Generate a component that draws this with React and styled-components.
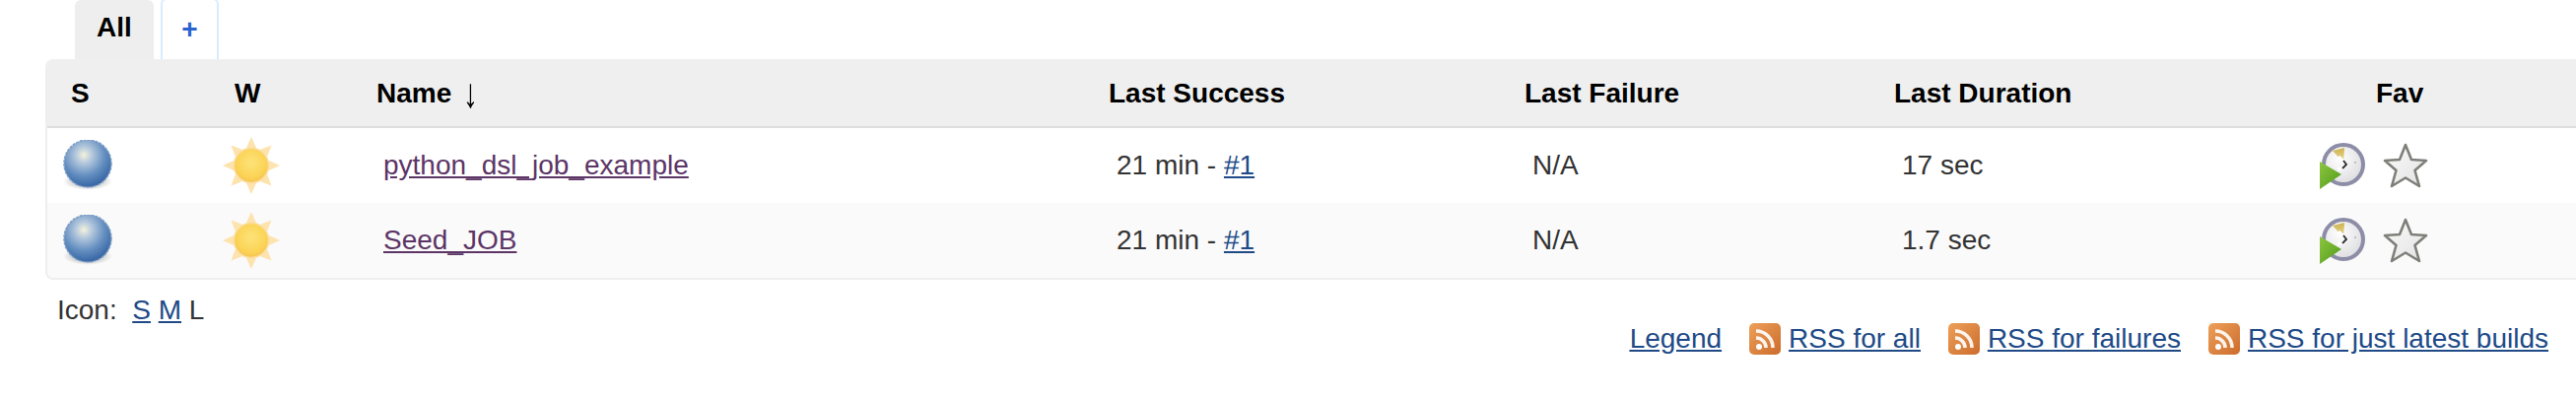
import React from "react";
import styled, { createGlobalStyle } from "styled-components";

const Global = createGlobalStyle`
  html, body { margin: 0; padding: 0; background: #fff; }
  body { font-family: "Liberation Sans", Arial, sans-serif; font-size: 28px; color: #333; overflow: hidden; }
`;
const Page = styled.div`width: 2614px; height: 404px; overflow: hidden;`;
const TabBar = styled.div`display: flex; height: 60px; padding-left: 76px; gap: 7px;`;
const Tab = styled.div`
  width: 80px; box-sizing: border-box; background: #eee;
  border-top-left-radius: 6px; border-top-right-radius: 6px;
  font-weight: bold; color: #000; font-size: 28px; text-align: center; line-height: 56px;
`;
const AddTab = styled.a`
  width: 59px; box-sizing: border-box; border: 2px solid #d8ecfd; border-bottom: 0;
  border-top-left-radius: 6px; border-top-right-radius: 6px; margin-top: -2px;
  color: #2b62cf; font-weight: bold; font-size: 28px;
  text-align: center; line-height: 60px;
`;
const Table = styled.table`
  margin-left: 46px; width: 2568px; table-layout: fixed; border-collapse: separate; border-spacing: 0;
  border-left: 2px solid #eee; border-bottom: 2px solid #eee; border-top-left-radius: 8px; border-bottom-left-radius: 8px;
  overflow: hidden;
`;
const Col = styled.col`width: ${(p) => p.$w}px;`;
const Head = styled.th`
  height: 66px; padding: 2px 0 0 ${(p) => p.$pad}px; box-sizing: content-box; background: #efefef; border-bottom: 2px solid #ddd;
  text-align: left; font-weight: bold; font-size: 28px; color: #000; white-space: nowrap;
`;
const Arrow = styled.span`
  display: inline-block; font-weight: normal; font-size: 38px; margin-left: 10px; line-height: 20px;
  font-family: "Liberation Sans", sans-serif; transform: scaleX(0.8) scaleY(1.1); vertical-align: -4px;
`;
const Row = styled.tr`background: ${(p) => (p.$alt ? "#fafafa" : "#fff")};`;
const Cell = styled.td`
  height: 76px; padding: 0 0 0 ${(p) => p.$pad}px; box-sizing: border-box; vertical-align: middle; font-size: 28px; color: #333; white-space: nowrap;
`;
const IconWrap = styled.div`display: flex; align-items: center; gap: ${(p) => p.$gap || 0}px; filter: blur(0.5px);`;
const JobLink = styled.a`color: #5c3566; text-decoration: underline;`;
const BuildLink = styled.a`color: #204a87; text-decoration: underline;`;
const Footer = styled.div`display: flex; justify-content: space-between; align-items: flex-start; padding: 15px 28px 0 58px;`;
const Sizes = styled.div`line-height: 32px; white-space: pre;`;
const Rss = styled.div`display: flex; align-items: center; margin-top: 29px; height: 32px;`;
const RssItem = styled.a`display: flex; align-items: center; gap: 8px; margin-left: 28px; color: #204a87;`;
const RssText = styled.span`text-decoration: underline;`;
const RssGlyph = styled.span`display: flex; filter: blur(0.5px);`;

const Ball = () => (
  <svg width="50" height="52" viewBox="0 0 50 52">
    <defs>
      <radialGradient id="b" cx="0.42" cy="0.32" r="0.72">
        <stop offset="0" stopColor="#f5f2dc" />
        <stop offset="0.24" stopColor="#b4c8dd" />
        <stop offset="0.62" stopColor="#628dbf" />
        <stop offset="1" stopColor="#2f5f9f" />
      </radialGradient>
      <radialGradient id="bs" cx="0.5" cy="0.5" r="0.5">
        <stop offset="0" stopColor="#666" stopOpacity="0.75" />
        <stop offset="1" stopColor="#777" stopOpacity="0" />
      </radialGradient>
    </defs>
    <ellipse cx="25" cy="42" rx="25" ry="9" fill="url(#bs)" />
    <circle cx="25" cy="24" r="24" fill="url(#b)" stroke="#7d9dc6" strokeWidth="1.5" strokeDasharray="3 1" />
  </svg>
);

const rays = [0, 45, 90, 135, 180, 225, 270, 315];
const Sun = () => (
  <svg width="58" height="58" viewBox="0 0 58 58">
    <defs>
      <radialGradient id="s" cx="0.5" cy="0.42" r="0.6">
        <stop offset="0" stopColor="#fde27a" />
        <stop offset="0.7" stopColor="#fbd456" />
        <stop offset="1" stopColor="#f5c04e" />
      </radialGradient>
    </defs>
    {rays.map((r) => (
      <polygon key={r} points="29,0 34,11 24,11" fill="#fde3ae" transform={`rotate(${r} 29 29)`} />
    ))}
    <circle cx="29" cy="29" r="17.5" fill="url(#s)" stroke="#fbdc9c" strokeWidth="1.5" />
  </svg>
);

const Clock = () => (
  <svg width="46" height="48" viewBox="0 0 46 48">
    <defs>
      <radialGradient id="c" cx="0.4" cy="0.35" r="0.7">
        <stop offset="0" stopColor="#fff" />
        <stop offset="1" stopColor="#dcdce0" />
      </radialGradient>
      <linearGradient id="g" x1="0" y1="0" x2="1" y2="1">
        <stop offset="0" stopColor="#8ec63f" />
        <stop offset="1" stopColor="#4e9a1a" />
      </linearGradient>
      <linearGradient id="w" x1="0" y1="0" x2="0" y2="1">
        <stop offset="0" stopColor="#cfb24a" />
        <stop offset="1" stopColor="#e8dba0" />
      </linearGradient>
    </defs>
    <circle cx="25" cy="25" r="20" fill="#bbb" opacity="0.5" />
    <circle cx="24" cy="23" r="20" fill="url(#c)" stroke="#8d8da8" strokeWidth="4" />
    <polygon points="24,21 13,9 25,6" fill="url(#w)" />
    <path d="M19 15 L24 20 L27 23 L23 27 L18 28" stroke="#fff" strokeWidth="3.5" fill="none" />
    <path d="M24 19 L27 23 L23 27" stroke="#333" strokeWidth="2" fill="none" />
    <circle cx="36" cy="21" r="0.9" fill="#aaa" />
    <polygon points="0,20 22,33 0,48" fill="url(#g)" />
  </svg>
);

const Star = () => (
  <svg width="46" height="46" viewBox="0 0 46 46">
    <defs>
      <linearGradient id="st" x1="0" y1="0" x2="1" y2="1">
        <stop offset="0" stopColor="#fbfbfb" />
        <stop offset="1" stopColor="#e2e2e2" />
      </linearGradient>
    </defs>
    <polygon
      points="23,2 29,17 44,18 32.5,28 37,44 23,35.5 9,44 13.5,28 2,18 17,17"
      fill="url(#st)" stroke="#7f7f7a" strokeWidth="2.6" strokeLinejoin="round"
    />
  </svg>
);

const RssIcon = () => (
  <svg width="32" height="32" viewBox="0 0 32 32">
    <defs>
      <linearGradient id="r" x1="0" y1="0" x2="1" y2="1">
        <stop offset="0" stopColor="#eda05a" />
        <stop offset="1" stopColor="#cc6c2c" />
      </linearGradient>
    </defs>
    <rect width="32" height="32" rx="5" fill="url(#r)" />
    <circle cx="10" cy="24" r="3" fill="#fff" />
    <path d="M7 15a10 10 0 0 1 10 10M7 8a17 17 0 0 1 17 17" stroke="#fff" strokeWidth="3.6" fill="none" opacity="0.9" />
  </svg>
);

const jobs = [
  { name: "python_dsl_job_example", duration: "17 sec" },
  { name: "Seed_JOB", duration: "1.7 sec" },
];

export default function App() {
  return (
    <Page>
      <Global />
      <TabBar>
        <Tab>All</Tab>
        <AddTab>+</AddTab>
      </TabBar>
      <Table>
        <colgroup>
          <Col $w={157} />
          <Col $w={157} />
          <Col $w={743} />
          <Col $w={422} />
          <Col $w={375} />
          <Col $w={438} />
          <Col $w={274} />
        </colgroup>
        <thead>
          <tr>
            <Head $pad={24}>S</Head>
            <Head $pad={33}>W</Head>
            <Head $pad={20}>Name<Arrow>↓</Arrow></Head>
            <Head $pad={20}>Last Success</Head>
            <Head $pad={20}>Last Failure</Head>
            <Head $pad={20}>Last Duration</Head>
            <Head $pad={71}>Fav</Head>
          </tr>
        </thead>
        <tbody>
          {jobs.map((j, i) => (
            <Row key={j.name} $alt={i % 2 === 1}>
              <Cell $pad={16}><IconWrap><Ball /></IconWrap></Cell>
              <Cell $pad={21}><IconWrap><Sun /></IconWrap></Cell>
              <Cell $pad={27}><JobLink href="#">{j.name}</JobLink></Cell>
              <Cell $pad={28}>21 min - <BuildLink href="#">#1</BuildLink></Cell>
              <Cell $pad={28}>N/A</Cell>
              <Cell $pad={28}>{j.duration}</Cell>
              <Cell $pad={14}>
                <IconWrap $gap={18}><Clock /><Star /></IconWrap>
              </Cell>
            </Row>
          ))}
        </tbody>
      </Table>
      <Footer>
        <Sizes>Icon:  <BuildLink href="#">S</BuildLink> <BuildLink href="#">M</BuildLink> L</Sizes>
        <Rss>
          <RssItem href="#"><RssText>Legend</RssText></RssItem>
          <RssItem href="#"><RssGlyph><RssIcon /></RssGlyph><RssText>RSS for all</RssText></RssItem>
          <RssItem href="#"><RssGlyph><RssIcon /></RssGlyph><RssText>RSS for failures</RssText></RssItem>
          <RssItem href="#"><RssGlyph><RssIcon /></RssGlyph><RssText>RSS for just latest builds</RssText></RssItem>
        </Rss>
      </Footer>
    </Page>
  );
}
